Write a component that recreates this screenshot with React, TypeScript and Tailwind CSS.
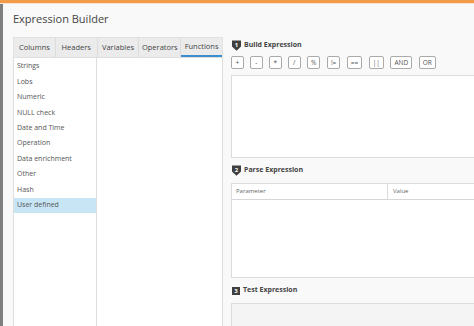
import React from "react";

const tabs = ["Columns", "Headers", "Variables", "Operators", "Functions"];
const groups = ["Strings", "Lobs", "Numeric", "NULL check", "Date and Time", "Operation", "Data enrichment", "Other", "Hash", "User defined"];
const ops = ["+", "-", "*", "/", "%", "!=", "==", "||", "AND", "OR"];

function Shield({ n }: { n: number }) {
  return (
    <span className="relative inline-flex w-[9px] h-[11px] items-center justify-center">
      <svg width="9" height="11" viewBox="0 0 9 11" className="absolute inset-0">
        <path d="M0 0.5 H9 V6.5 L4.5 10.8 L0 6.5 Z" fill="#3f3f3f" />
      </svg>
      <span className="relative text-[6px] font-bold text-white leading-none -mt-[2px]">{n}</span>
    </span>
  );
}

function Square({ n }: { n: number }) {
  return (
    <span className="inline-flex w-[8px] h-[8px] items-center justify-center bg-[#3f3f3f] text-[6px] font-bold text-white leading-none">{n}</span>
  );
}

function SectionTitle({ badge, title }: { badge: React.ReactNode; title: string }) {
  return (
    <div className="flex items-center gap-[3px] pl-[1px]">
      {badge}
      <span className="text-[7px] font-bold text-[#444]">{title}</span>
    </div>
  );
}

export default function App() {
  return (
    <div className="w-[474px] h-[326px] overflow-hidden bg-[#f9f9f9] flex flex-col" style={{ fontFamily: '"Open Sans", "Noto Sans", sans-serif' }}>
      <div className="h-[3px] bg-[#f29b48] shrink-0" />
      <div className="h-px bg-[#fbe4cf] shrink-0" />
      <div className="flex flex-1 min-h-0">
        <div className="w-[3px] bg-[#7f7f7f] shrink-0" />
        <div className="flex-1 flex flex-col min-w-0">
          <div className="h-[33px] shrink-0 pl-[10px] flex items-center text-[11px] text-[#444] pb-[3px]">Expression Builder</div>
          <div className="flex flex-1 min-h-0">
            <div className="w-[210px] ml-[10px] flex flex-col shrink-0">
              <div className="flex h-[20px] bg-[#ebebeb] border border-[#e2e2e2] border-b-0 shrink-0">
                {tabs.map((t, i) => (
                  <div
                    key={t}
                    className={`flex-1 flex items-center justify-center text-[7.5px] text-[#444] ${i < tabs.length - 1 ? "border-r border-[#dcdcdc]" : ""} ${t === "Functions" ? "border-b-2 border-b-[#3a8fd0]" : ""}`}
                  >
                    {t}
                  </div>
                ))}
              </div>
              <div className="flex flex-1 min-h-0">
                <div className="w-[84px] bg-white border border-[#dedede] border-b-0 pt-px shrink-0">
                  {groups.map((g) => (
                    <div key={g} className={`h-[15.4px] flex items-center pl-[3px] text-[7px] text-[#555] ${g === "User defined" ? "bg-[#c7e5f4]" : ""}`}>
                      {g}
                    </div>
                  ))}
                </div>
                <div className="flex-1 bg-white border border-l-0 border-[#dedede] border-b-0" />
              </div>
            </div>
            <div className="w-[260px] ml-[8px] flex flex-col shrink-0">
              <div className="pt-[3px] h-[19px] shrink-0">
                <SectionTitle badge={<Shield n={1} />} title="Build Expression" />
              </div>
              <div className="flex gap-[6.5px] h-[13px] shrink-0">
                {ops.map((o) => (
                  <div key={o} className="min-w-[12.5px] px-[3px] flex items-center justify-center border border-[#aaa] rounded-[2px] bg-white text-[6.5px] text-[#555]">
                    {o}
                  </div>
                ))}
              </div>
              <div className="h-[83px] mt-[6px] bg-white border border-r-0 border-[#dcdcdc] shrink-0" />
              <div className="h-[25px] flex items-center shrink-0">
                <SectionTitle badge={<Shield n={2} />} title="Parse Expression" />
              </div>
              <div className="h-[95px] bg-white border border-r-0 border-[#dcdcdc] flex flex-col shrink-0">
                <div className="h-[16px] flex border-b border-[#d6d6d6] text-[6px] text-[#666]">
                  <div className="w-[156px] border-r border-[#dcdcdc] pl-[4px] flex items-center">Parameter</div>
                  <div className="flex-1 pl-[5px] flex items-center">Value</div>
                </div>
              </div>
              <div className="h-[25px] flex items-center shrink-0">
                <SectionTitle badge={<Square n={3} />} title="Test Expression" />
              </div>
              <div className="flex-1 bg-[#f4f4f4] border border-r-0 border-b-0 border-[#dcdcdc]" />
            </div>
          </div>
        </div>
      </div>
    </div>
  );
}
